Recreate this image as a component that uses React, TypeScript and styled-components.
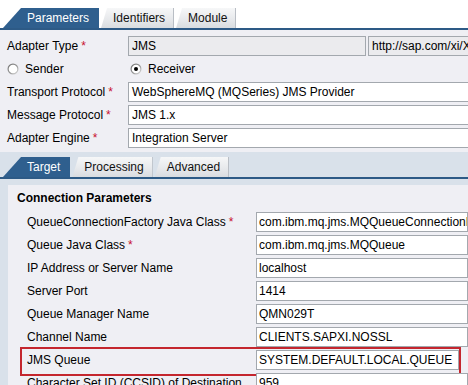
import React from "react";
import styled, { createGlobalStyle } from "styled-components";

const GlobalStyle = createGlobalStyle`
  html, body {
    margin: 0;
    padding: 0;
    width: 468px;
    height: 385px;
    overflow: hidden;
    background: #efeff4;
    font-family: "Liberation Sans", Arial, sans-serif;
    font-size: 12px;
    color: #000;
  }
`;

const Page = styled.div`
  width: 468px;
  height: 385px;
  overflow: hidden;
`;

const TabStrip = styled.div<{ $sub?: boolean }>`
  display: flex;
  align-items: flex-end;
  height: ${(p) => (p.$sub ? 25 : 28)}px;
  padding-left: 3px;
  background: ${(p) => (p.$sub ? "#d9e1ea" : "#ffffff")};
  border-bottom: 2px solid #2d5a86;
  box-sizing: border-box;
  height: ${(p) => (p.$sub ? 27 : 30)}px;
`;

const Tab = styled.div<{ $active?: boolean }>`
  height: 20px;
  display: flex;
  align-items: center;
  box-sizing: border-box;
  white-space: nowrap;
  margin-left: ${(p) => (p.$active ? 0 : 2)}px;
  padding: ${(p) => (p.$active ? "0 10px 0 24px" : "0 8px 0 12px")};
  color: ${(p) => (p.$active ? "#ffffff" : "#111")};
  background: ${(p) =>
    p.$active
      ? "#2f5f8e"
      : "linear-gradient(to bottom, #f6f7f8 0%, #e6e8eb 60%, #d9dce0 100%)"};
  clip-path: ${(p) =>
    p.$active
      ? "polygon(18px 0, 100% 0, 100% 100%, 0 100%)"
      : "polygon(6px 0, 100% 0, 100% 100%, 0 100%)"};
  border-right: ${(p) => (p.$active ? "none" : "1px solid #b9bec5")};
`;

const Form = styled.div`
  display: flex;
  flex-direction: column;
  gap: 3px;
  padding: 6px 0 4px 7px;
`;

const Row = styled.div`
  display: flex;
  align-items: center;
  height: 20px;
  white-space: nowrap;
`;

const Label = styled.div<{ $w: number }>`
  width: ${(p) => p.$w}px;
  flex: none;
`;

const Req = styled.span`
  color: #c8102e;
  margin-left: 3px;
`;

const Field = styled.div<{ $w?: number; $ro?: boolean; $pad?: number }>`
  flex: none;
  width: ${(p) => (p.$w ? `${p.$w}px` : "260px")};
  height: 20px;
  box-sizing: border-box;
  border: 1px solid #a3a8ae;
  background: ${(p) => (p.$ro ? "#ebebee" : "#ffffff")};
  padding-left: ${(p) => p.$pad ?? 3}px;
  display: flex;
  align-items: center;
  overflow: hidden;
  white-space: nowrap;
  margin-right: 2px;
`;

const RadioOpt = styled.div<{ $w?: number }>`
  display: flex;
  align-items: center;
  gap: 6px;
  width: ${(p) => (p.$w ? `${p.$w}px` : "auto")};
  flex: none;
`;

const SubFrame = styled.div`
  background: #d9e1ea;
  padding: 6px 0 0 8px;
  height: 220px;
`;

const Panel = styled.div`
  background: #efeff4;
  height: 100%;
  padding: 6px 0 0 9px;
  box-sizing: border-box;
`;

const Heading = styled.div`
  font-weight: bold;
  line-height: 14px;
  margin-bottom: 7px;
`;

const ParamList = styled.div`
  display: flex;
  flex-direction: column;
  gap: 3px;
  padding-left: 10px;
`;

const ParamRow = styled(Row)`
  position: relative;
`;

const Highlight = styled.div`
  position: absolute;
  left: -7px;
  top: -3px;
  width: 441px;
  height: 29px;
  box-sizing: border-box;
  border: 2px solid #c4262e;
  pointer-events: none;
`;

function Radio({ checked }: { checked?: boolean }) {
  return (
    <svg width="12" height="12" viewBox="0 0 12 12">
      <defs>
        <linearGradient id="rb" x1="0" y1="0" x2="1" y2="1">
          <stop offset="0" stopColor="#6f6f6f" />
          <stop offset="0.55" stopColor="#9a9a9a" />
          <stop offset="1" stopColor="#e6e6e6" />
        </linearGradient>
      </defs>
      <circle cx="6" cy="6" r="5.5" fill="url(#rb)" />
      <circle cx="6" cy="6" r="4.3" fill="#ffffff" />
      {checked && <circle cx="6" cy="6" r="2" fill="#000" />}
    </svg>
  );
}

const params: { label: string; value: string; req?: boolean; mark?: boolean }[] = [
  { label: "QueueConnectionFactory Java Class", value: "com.ibm.mq.jms.MQQueueConnectionFactory", req: true },
  { label: "Queue Java Class", value: "com.ibm.mq.jms.MQQueue", req: true },
  { label: "IP Address or Server Name", value: "localhost" },
  { label: "Server Port", value: "1414" },
  { label: "Queue Manager Name", value: "QMN029T" },
  { label: "Channel Name", value: "CLIENTS.SAPXI.NOSSL" },
  { label: "JMS Queue", value: "SYSTEM.DEFAULT.LOCAL.QUEUE", mark: true },
  { label: "Character Set ID (CCSID) of Destination", value: "959" },
];

export default function App() {
  return (
    <Page>
      <GlobalStyle />
      <TabStrip>
        <Tab $active>Parameters</Tab>
        <Tab>Identifiers</Tab>
        <Tab>Module</Tab>
      </TabStrip>
      <Form>
        <Row>
          <Label $w={121}>
            Adapter Type<Req>*</Req>
          </Label>
          <Field $w={238} $ro>JMS</Field>
          <Field $w={110} $ro>http://sap.com/xi/XI/System</Field>
        </Row>
        <Row>
          <RadioOpt $w={123}>
            <Radio />
            Sender
          </RadioOpt>
          <RadioOpt>
            <Radio checked />
            Receiver
          </RadioOpt>
        </Row>
        <Row>
          <Label $w={121}>
            Transport Protocol<Req>*</Req>
          </Label>
          <Field $w={345}>WebSphereMQ (MQSeries) JMS Provider</Field>
        </Row>
        <Row>
          <Label $w={121}>
            Message Protocol<Req>*</Req>
          </Label>
          <Field $w={345}>JMS 1.x</Field>
        </Row>
        <Row>
          <Label $w={121}>
            Adapter Engine<Req>*</Req>
          </Label>
          <Field $w={345}>Integration Server</Field>
        </Row>
      </Form>
      <TabStrip $sub>
        <Tab $active>Target</Tab>
        <Tab>Processing</Tab>
        <Tab>Advanced</Tab>
      </TabStrip>
      <SubFrame>
        <Panel>
          <Heading>Connection Parameters</Heading>
          <ParamList>
            {params.map((p) => (
              <ParamRow key={p.label}>
                <Label $w={229}>
                  {p.label}
                  {p.req && <Req>*</Req>}
                </Label>
                <Field $w={p.mark ? 203 : 212} $pad={2}>
                  {p.value}
                </Field>
                {p.mark && <Highlight />}
              </ParamRow>
            ))}
          </ParamList>
        </Panel>
      </SubFrame>
    </Page>
  );
}
